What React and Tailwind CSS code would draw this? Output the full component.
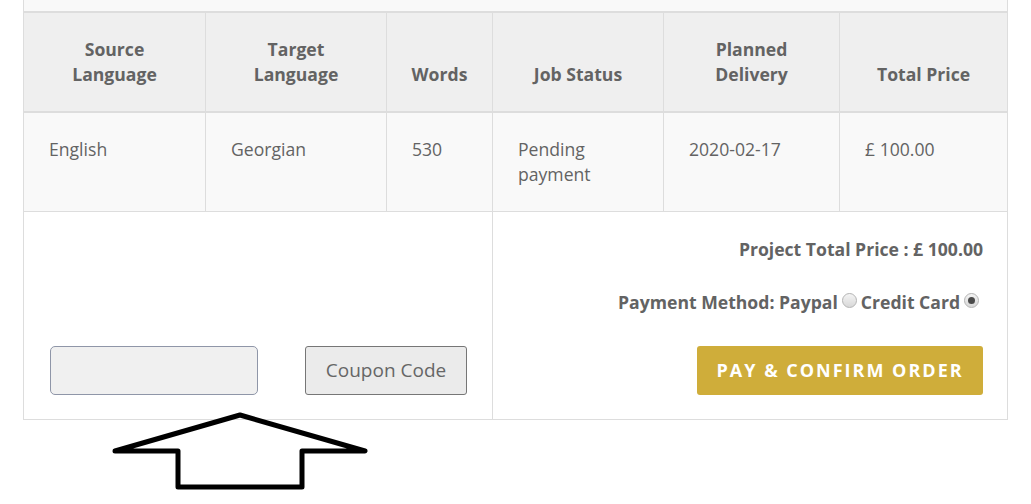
import React, { useState } from 'react';

const columns = [
  { label: ['Source', 'Language'], w: 'w-[182px]' },
  { label: ['Target', 'Language'], w: 'w-[181px]' },
  { label: ['Words'], w: 'w-[106px]' },
  { label: ['Job Status'], w: 'w-[171px]' },
  { label: ['Planned', 'Delivery'], w: 'w-[176px]' },
  { label: ['Total Price'], w: 'w-[168px]' },
];

const job = ['English', 'Georgian', '530', 'Pending payment', '2020-02-17', '£ 100.00'];

function Radio({ checked, onClick }) {
  return (
    <span
      onClick={onClick}
      className="relative -top-[4px] mx-[4px] inline-flex h-[15px] w-[15px] cursor-pointer items-center justify-center rounded-full border border-[#b5b5b5] bg-gradient-to-b from-[#f4f4f4] to-[#d8d8d8] align-middle"
    >
      {checked && <span className="h-[7px] w-[7px] rounded-full bg-[#4a4a4a]" />}
    </span>
  );
}

function UpArrow() {
  // hand-drawn annotation pointing at the coupon field
  return (
    <svg className="pointer-events-none absolute left-0 top-0" width="400" height="504" viewBox="0 0 400 504">
      <polygon
        points="240,415 365,451 302,451 302,487 178,487 178,451 115,451"
        fill="none"
        stroke="#000"
        strokeWidth="5"
        strokeLinejoin="round"
      />
    </svg>
  );
}

export default function App() {
  const [method, setMethod] = useState('card');
  const [coupon, setCoupon] = useState('');

  return (
    <div className="relative h-[504px] w-full bg-white font-['Open_Sans',sans-serif] text-[17.6px] leading-[25px] text-[#636363]">
      <table className="ml-[23px] w-[984px] table-fixed border-collapse">
        <colgroup>
          {columns.map((c) => (
            <col key={c.label.join(' ')} className={c.w} />
          ))}
        </colgroup>
        <tbody>
          <tr>
            <td colSpan={6} className="h-[12px] border-x border-[#dddddd] bg-[#f9f9f9] p-0" />
          </tr>
          <tr className="bg-[#efefef]">
            {columns.map((c) => (
              <th
                key={c.label.join(' ')}
                className="border border-y-2 border-[#dddddd] px-[8px] py-[24px] text-center align-bottom font-bold"
              >
                {c.label.map((l) => (
                  <div key={l}>{l}</div>
                ))}
              </th>
            ))}
          </tr>
          <tr className="bg-[#f9f9f9]">
            {job.map((v, i) => (
              <td key={i} className="border border-[#dddddd] py-[24px] pl-[25px] pr-[20px] align-top">
                {v === 'Pending payment' ? (
                  <>
                    <div>Pending</div>
                    <div>payment</div>
                  </>
                ) : (
                  v
                )}
              </td>
            ))}
          </tr>
          <tr>
            <td colSpan={3} className="h-[208px] border border-[#dddddd] pb-[24px] pl-[26px] pr-[25px] align-bottom">
              <div className="flex items-center justify-between">
                <input
                  value={coupon}
                  onChange={(e) => setCoupon(e.target.value)}
                  className="h-[49px] w-[208px] rounded-[5px] border border-[#8f96a8] bg-[#f0f0f0] px-3 outline-none"
                />
                <button className="h-[49px] w-[162px] rounded-[3px] border border-[#767676] bg-[#ebebeb] text-[19px] text-[#666666]">
                  Coupon Code
                </button>
              </div>
            </td>
            <td colSpan={3} className="border border-[#dddddd] pb-[24px] pr-[24px] pt-[25px] text-right align-top font-bold">
              <div>Project Total Price : £ 100.00</div>
              <div className="mt-[28px]">
                Payment Method: Paypal
                <Radio checked={method === 'paypal'} onClick={() => setMethod('paypal')} />
                Credit Card
                <Radio checked={method === 'card'} onClick={() => setMethod('card')} />
              </div>
              <div className="mt-[31px] flex justify-end">
                <button className="h-[49px] w-[286px] rounded-[3px] bg-[#cfad3a] text-[18px] font-bold uppercase tracking-[2px] text-white">
                  Pay &amp; Confirm Order
                </button>
              </div>
            </td>
          </tr>
        </tbody>
      </table>
      <UpArrow />
    </div>
  );
}
